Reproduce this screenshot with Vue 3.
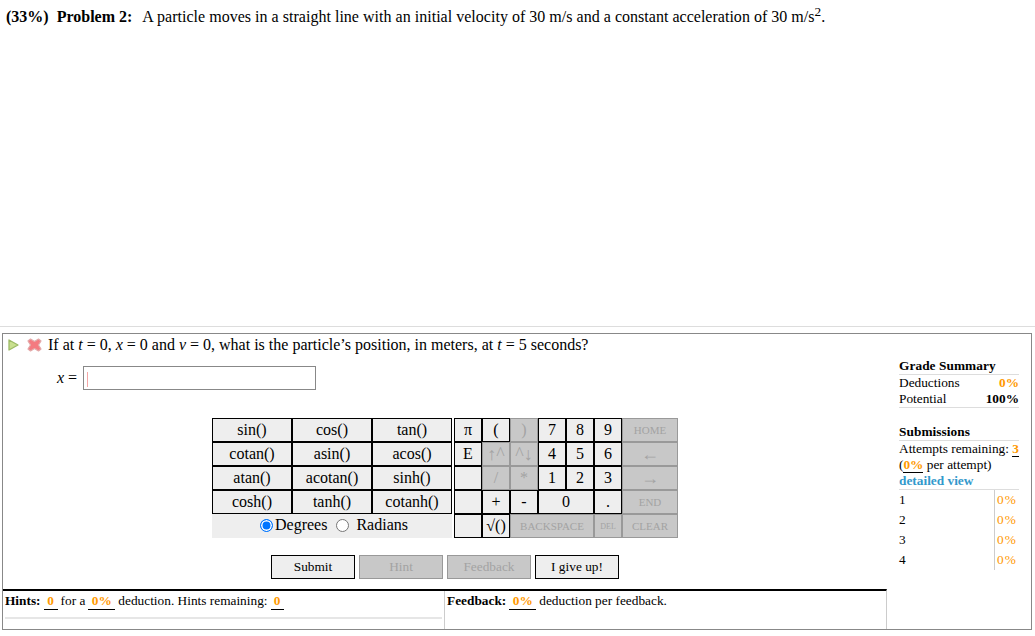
<script setup>
const funcs = ['sin()','cos()','tan()','cotan()','asin()','acos()','atan()','acotan()','sinh()','cosh()','tanh()','cotanh()']
const keys = [
  {t:'π',c:'k'},{t:'(',c:'k big'},{t:')',c:'k off big'},{t:'7',c:'k'},{t:'8',c:'k'},{t:'9',c:'k'},{t:'HOME',c:'k off wide small'},
  {t:'E',c:'k'},{t:'↑^',c:'k off arrow'},{t:'^↓',c:'k off arrow'},{t:'4',c:'k'},{t:'5',c:'k'},{t:'6',c:'k'},{t:'←',c:'k off wide arrow'},
  {t:'',c:'k'},{t:'/',c:'k off'},{t:'*',c:'k off'},{t:'1',c:'k'},{t:'2',c:'k'},{t:'3',c:'k'},{t:'→',c:'k off wide arrow'},
  {t:'',c:'k'},{t:'+',c:'k'},{t:'-',c:'k'},{t:'0',c:'k two'},{t:'.',c:'k'},{t:'END',c:'k off wide small'},
  {t:'',c:'k'},{t:'√()',c:'k big'},{t:'BACKSPACE',c:'k off three small'},{t:'DEL',c:'k off tiny'},{t:'CLEAR',c:'k off wide small'}
]
const subs = [1,2,3,4]
</script>

<template>
  <div class="page">
    <div class="problem">
      <b>(33%)</b><b class="name">Problem 2:</b><span class="stem">A particle moves in a straight line with an initial velocity of 30 m/s and a constant acceleration of 30 m/s<sup>2</sup>.</span>
    </div>
    <div class="rule"></div>
    <div class="frame">
      <div class="main">
        <div class="question">
          <svg class="play" width="11" height="12" viewBox="0 0 11 12"><path d="M1 1 L10 6 L1 11 Z" fill="#c9e08e" stroke="#9dbb66" stroke-width="1.3" stroke-linejoin="round"/></svg>
          <svg class="cross" width="15" height="14" viewBox="0 0 15 14"><path d="M3.500 1 L7.500 3.500 L11.500 1 L14 3 L11.500 7 L14 11 L11.500 13 L7.500 10.500 L3.500 13 L1 11 L3.500 7 L1 3 Z" fill="#f47a80" stroke="#e3a9a9" stroke-width="1.200" stroke-linejoin="round"/></svg>
          <span>If at <i>t</i> = 0, <i>x</i> = 0 and <i>v</i> = 0, what is the particle’s position, in meters, at <i>t</i> = 5 seconds?</span>
        </div>
        <div class="answer">
          <span class="lbl"><i>x</i> =</span>
          <div class="input"><span class="caret"></span></div>
        </div>
        <div class="calc">
          <div class="left">
            <div class="funcs">
              <div v-for="f in funcs" :key="f" class="f">{{ f }}</div>
            </div>
            <div class="radios">
              <span class="radio on"></span><span class="rt">Degrees</span>
              <span class="radio"></span><span class="rt">Radians</span>
            </div>
          </div>
          <div class="keys">
            <div v-for="(k,i) in keys" :key="i" :class="k.c">{{ k.t }}</div>
          </div>
        </div>
        <div class="buttons">
          <div class="btn">Submit</div>
          <div class="btn off">Hint</div>
          <div class="btn off">Feedback</div>
          <div class="btn">I give up!</div>
        </div>
        <div class="bottom">
          <div class="hints">
            <div class="line"><b>Hints:</b><span class="v n1">0</span>for a<span class="v n2">0%</span>deduction. Hints remaining:<span class="v n3">0</span></div>
            <div class="hr"></div>
          </div>
          <div class="feedback">
            <div class="line"><b>Feedback:</b><span class="v n2">0%</span>deduction per feedback.</div>
          </div>
        </div>
      </div>
      <div class="side">
        <div class="head">Grade Summary</div>
        <div class="row"><span>Deductions</span><b class="org">0%</b></div>
        <div class="row last"><span>Potential</span><b>100%</b></div>
        <div class="head sub">Submissions</div>
        <div class="text">Attempts remaining: <span class="org mark">3</span></div>
        <div class="text">(<span class="org mark">0%</span> per attempt)</div>
        <div class="text link">detailed view</div>
        <div class="subs">
          <div v-for="s in subs" :key="s" class="sr"><span>{{ s }}</span><span class="pct">0%</span></div>
        </div>
      </div>
    </div>
  </div>
</template>

<style>
html, body { margin: 0; background: #fff; }
</style>

<style scoped>
.page { width: 1035px; height: 636px; overflow: hidden; font-family: "Liberation Serif", serif; color: #000; position: relative; }
.problem { height: 326px; box-sizing: border-box; padding: 8px 0 0 6px; font-size: 16px; line-height: 18px; }
.problem .name { margin-left: 8px; }
.stem { margin-left: 10px; letter-spacing: 0.02px; }
sup { font-size: 13.33px; line-height: 0; }
.rule { height: 1px; background: #ddd; }
.frame { margin: 6px 0 0 2px; width: 1030px; height: 297px; box-sizing: border-box; border: 1px solid #888; display: flex; }
.main { width: 884px; display: flex; flex-direction: column; flex: none; }
.question { display: flex; align-items: center; height: 22px; padding-left: 5px; font-size: 16px; }
.question .play { margin-right: 8px; }
.question .cross { margin-right: 6px; }
.answer { display: flex; align-items: center; margin: 10px 0 0 54px; height: 24px; font-size: 16px; }
.lbl { margin-right: 6px; }
.input { width: 231px; height: 22px; border: 1px solid #888; position: relative; }
.caret { position: absolute; left: 3px; top: 5px; width: 1px; height: 15px; background: #f4a6a6; }
.calc { display: flex; margin: 28px 0 0 209px; font-size: 16px; }
.left { width: 240px; }
.funcs { display: grid; grid-template-columns: repeat(3, 80px); grid-auto-rows: 24px; }
.f { box-sizing: border-box; border: 1px solid #000; background: #eee; display: flex; align-items: center; justify-content: center; }
.radios { height: 24px; box-sizing: border-box; padding: 0 0 2px 4px; background: #eee; display: flex; align-items: center; justify-content: center; }
.radio { box-sizing: border-box; width: 13px; height: 13px; border: 1px solid #767676; border-radius: 50%; background: #fff; margin-right: 2px; }
.radio.on { border: 1.5px solid #0075ff; box-shadow: inset 0 0 0 1.5px #fff; background: #0075ff; }
.radio:not(.on) { margin-left: 9px; margin-right: 7px; }
.keys { display: grid; margin-left: 2px; grid-template-columns: repeat(6, 28px) 56px; grid-auto-rows: 24px; }
.k { box-sizing: border-box; border: 1px solid #000; background: #eee; display: flex; align-items: center; justify-content: center; }
.k.off { border-color: #999; background: #c8c8c8; color: #a3a3a3; }
.k.arrow { font-size: 18px; }
.k.small { font-size: 11px; }
.k.tiny { font-size: 8px; }
.k.two { grid-column: span 2; }
.k.three { grid-column: span 3; }
.buttons { display: flex; gap: 4px; margin: 17px 0 0 268px; font-size: 13.33px; }
.btn { box-sizing: border-box; width: 84px; height: 24px; border: 1px solid #000; background: #eee; display: flex; align-items: center; justify-content: center; }
.btn.off { border-color: #999; background: #c8c8c8; color: #a3a3a3; }
.bottom { margin-top: auto; height: 40px; border-top: 2px solid #000; display: flex; font-size: 13.33px; box-sizing: border-box; border-right: 1px solid #ccc; }
.hints { width: 442px; border-right: 1px solid #ccc; padding: 2px 0 0 2px; box-sizing: border-box; }
.feedback { flex: 1; padding: 2px 0 0 2px; }
.line { display: flex; align-items: flex-start; height: 16px; line-height: 15px; }
.hr { height: 2px; background: #e6e6e6; margin: 8px 2px 0 0; }
.v { color: #f90; font-weight: bold; border-bottom: 1px solid #000; text-align: center; box-sizing: border-box; height: 17px; margin: 0 3px; flex: none; }
.n1 { width: 14px; }
.n2 { width: 27px; }
.n3 { width: 13px; }
.side { flex: 1; padding: 24px 12px 0 12px; font-size: 13.33px; }
.head { font-weight: bold; border-bottom: 1px solid #ddd; line-height: 16px; letter-spacing: 0.06px; }
.head.sub { margin-top: 16px; }
.row { display: flex; justify-content: space-between; line-height: 16px; }
.row.last { border-bottom: 1px solid #ddd; }
.org { color: #f90; font-weight: bold; }
.text { line-height: 16px; }
.mark { display: inline-block; border-bottom: 1px solid #000; line-height: 15px; height: 16px; box-sizing: border-box; }
.link { color: #39c; font-weight: bold; border-bottom: 1px solid #ddd; }
.sr { display: flex; height: 20px; align-items: center; }
.sr span:first-child { width: 95px; }
.pct { color: #f90; border-left: 1px solid #ccc; padding-left: 2px; height: 20px; line-height: 20px; letter-spacing: 1px; }
</style>
